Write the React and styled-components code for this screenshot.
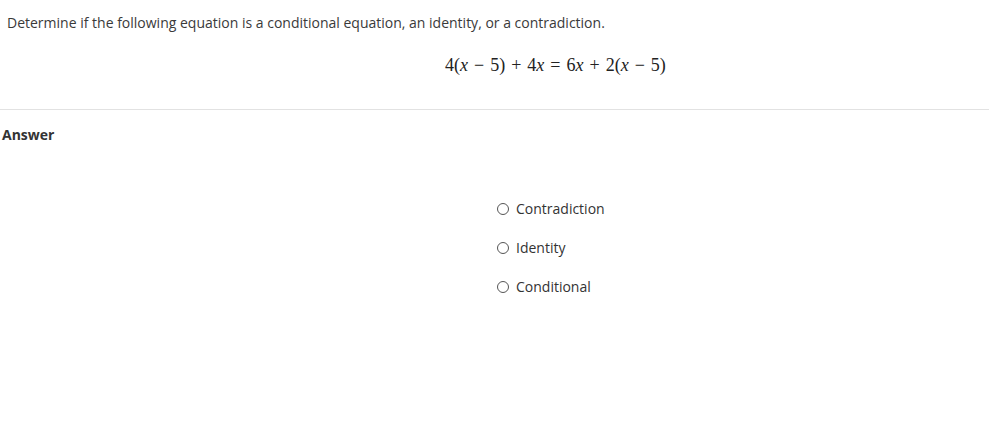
import React from 'react';
import styled, { createGlobalStyle } from 'styled-components';

const GlobalStyle = createGlobalStyle`
  html, body {
    margin: 0;
    padding: 0;
    background: #fff;
  }
  body {
    font-family: "Open Sans", "Liberation Sans", sans-serif;
    color: #333;
  }
`;

const Page = styled.div`
  width: 989px;
  height: 427px;
  display: flex;
  flex-direction: column;
`;

const Question = styled.div`
  padding: 13px 0 0 7px;
  font-size: 14px;
  line-height: 20px;
  color: #3a3a3a;
`;

const Equation = styled.div`
  margin-top: 22px;
  padding-left: 445px;
  font-family: "Liberation Serif", "Times New Roman", serif;
  font-size: 18px;
  line-height: 20px;
  color: #222;
`;

const Var = styled.i``;

const Op = styled.span`
  padding: 0 ${p => p.gap || 6}px;
`;

const Divider = styled.hr`
  margin: 34px 0 0 0;
  border: none;
  border-top: 1px solid #e2e2e2;
  width: 989px;
`;

const AnswerLabel = styled.div`
  margin: 16px 0 0 2px;
  font-size: 14px;
  font-weight: 700;
  line-height: 18px;
  color: #333;
`;

const Options = styled.div`
  margin: 55px 0 0 497px;
  display: flex;
  flex-direction: column;
  gap: 19px;
`;

const Option = styled.label`
  display: flex;
  align-items: center;
  gap: 7px;
  font-size: 14px;
  line-height: 20px;
  color: #333;
  cursor: pointer;
`;

const Radio = styled.span`
  width: 12px;
  height: 12px;
  border: 1px solid #555;
  border-radius: 50%;
  box-sizing: border-box;
  flex: none;
`;

const choices = ['Contradiction', 'Identity', 'Conditional'];

export default function App() {
  return (
    <Page>
      <GlobalStyle />
      <Question>
        Determine if the following equation is a conditional equation, an identity, or a contradiction.
      </Question>
      <Equation>
        4(<Var>x</Var><Op>−</Op>5)<Op>+</Op>4<Var>x</Var><Op gap={6}>=</Op>6<Var>x</Var><Op>+</Op>2(<Var>x</Var><Op>−</Op>5)
      </Equation>
      <Divider />
      <AnswerLabel>Answer</AnswerLabel>
      <Options>
        {choices.map(c => (
          <Option key={c}>
            <Radio />
            {c}
          </Option>
        ))}
      </Options>
    </Page>
  );
}
